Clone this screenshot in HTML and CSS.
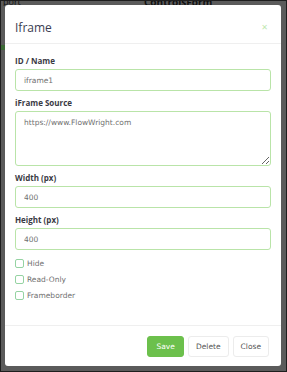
FILE: index.html
```html
<!DOCTYPE html>
<html>
<head>
<meta charset="utf-8">
<link rel="stylesheet" href="styles.css">
</head>
<body>
<div class="backdrop">
  <div class="bg-top"><span class="bg-left">port</span><span class="bg-title">ControlsForm</span></div>
  <div class="bg-mark"></div>
</div>
<div class="modal">
  <div class="modal-header">
    <h1 class="modal-title">Iframe</h1>
    <span class="modal-close">&#x2715;</span>
  </div>
  <div class="modal-body">
    <label class="field-label">ID / Name</label>
    <input class="field-input" type="text" value="iframe1">
    <label class="field-label">iFrame Source</label>
    <textarea class="field-textarea">https://www.FlowWright.com</textarea>
    <label class="field-label">Width (px)</label>
    <input class="field-input" type="text" value="400">
    <label class="field-label">Height (px)</label>
    <input class="field-input" type="text" value="400">
    <div class="checks">
      <label class="check"><span class="box"></span>Hide</label>
      <label class="check"><span class="box"></span>Read-Only</label>
      <label class="check"><span class="box"></span>Frameborder</label>
    </div>
  </div>
  <div class="modal-footer">
    <button class="btn btn-save">Save</button>
    <button class="btn">Delete</button>
    <button class="btn">Close</button>
  </div>
</div>
</body>
</html>
```
FILE: styles.css
```css
* { box-sizing: border-box; }
html, body { margin: 0; padding: 0; }
body {
  width: 287px;
  height: 372px;
  background: #5b5b5b;
  font-family: "DejaVu Sans", "Open Sans", sans-serif;
  position: relative;
  overflow: hidden;
  border: 1px solid #1e1e1e;
}
.backdrop { height: 100%; }
.bg-top {
  height: 5px;
  position: relative;
  overflow: hidden;
  font-family: "Open Sans", sans-serif;
  font-size: 9px;
  font-weight: 700;
  color: #111;
}
.bg-left { position: absolute; left: 2px; top: -6px; font-weight: 400; }
.bg-title { position: absolute; left: 143px; top: -6px; font-size: 10px; }
.bg-mark { margin-top: 39px; width: 4px; height: 5px; background: #3c6a36; }
.modal {
  position: absolute;
  left: 4px;
  top: 4px;
  width: 276px;
  height: 361px;
  background: #fff;
  border-radius: 3px;
  display: flex;
  flex-direction: column;
}
.modal-header {
  height: 39px;
  border-bottom: 1px solid #efefef;
  display: flex;
  align-items: center;
  justify-content: space-between;
  padding: 6px 13px 0 10px;
}
.modal-title {
  margin: 0;
  font-family: "Open Sans", sans-serif;
  font-size: 12px;
  font-weight: 500;
  color: #3b3d52;
}
.modal-close {
  font-size: 8px;
  color: #bfe8b0;
  margin-top: 1px;
}
.modal-body {
  flex: 1;
  padding: 10px 10px 0 10px;
  display: flex;
  flex-direction: column;
}
.field-label {
  font-family: "Open Sans", sans-serif;
  font-size: 8px;
  font-weight: 700;
  color: #3a3a44;
  line-height: 13px;
  margin-bottom: 2px;
}
.field-input, .field-textarea {
  width: 256px;
  border: 1px solid #b9e4a8;
  border-radius: 3px;
  font-family: inherit;
  font-size: 7.5px;
  color: #707070;
  padding: 0 8px;
  outline: none;
  margin: 0 0 5px 0;
}
.field-input { height: 22px; }
.field-textarea {
  height: 55px;
  padding-top: 5px;
  resize: vertical;
  line-height: 12px;
}
.checks {
  display: flex;
  flex-direction: column;
}
.check {
  display: flex;
  align-items: center;
  height: 16.4px;
  font-size: 7.5px;
  color: #707070;
}
.box {
  width: 9px;
  height: 9px;
  border: 1px solid #95d3a2;
  border-radius: 2px;
  margin-right: 3px;
}
.modal-footer {
  height: 41px;
  border-top: 1px solid #efefef;
  display: flex;
  justify-content: flex-end;
  align-items: center;
  gap: 4px;
  padding: 0 12px 0 0;
}
.btn {
  height: 21px;
  padding: 0 7px;
  border: 1px solid #ececec;
  border-radius: 3px;
  background: #fff;
  font-family: inherit;
  font-size: 7.5px;
  color: #555;
}
.btn-save {
  background: #6cc04c;
  border-color: #6cc04c;
  color: #fff;
  padding: 0 8px;
}
```
